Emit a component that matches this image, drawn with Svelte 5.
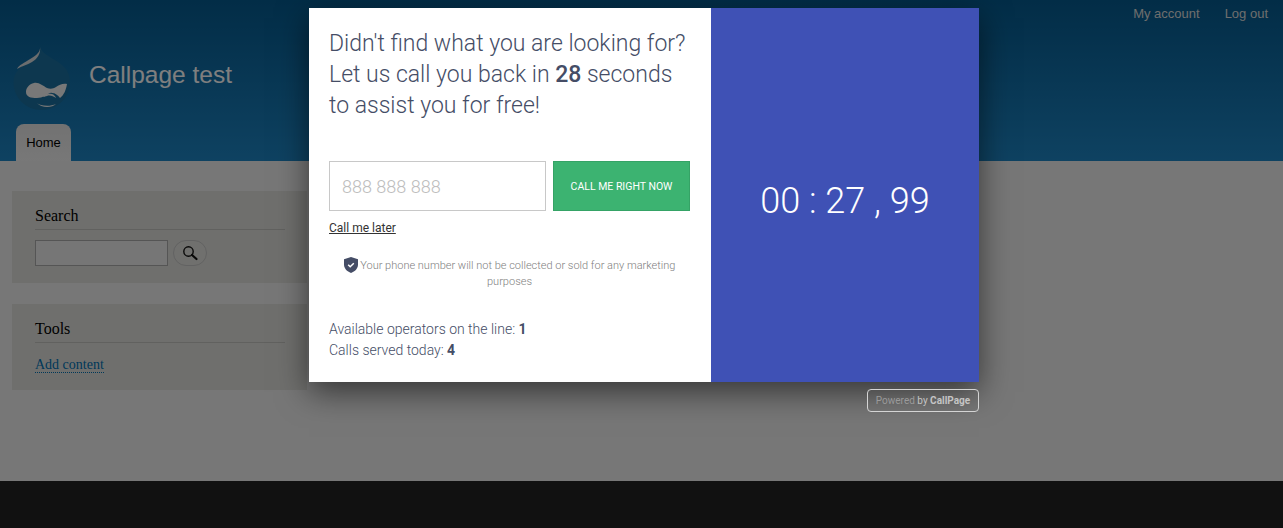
<script>
  let phone = '';
  const operators = 1;
  const callsToday = 4;
</script>

<div class="page">
  <header class="site-header">
    <nav class="secondary-menu">
      <a href="/user">My account</a>
      <a href="/logout">Log out</a>
    </nav>
    <div class="branding">
      <svg class="logo" viewBox="0 0 58 65" width="58" height="65" aria-label="Drupal">
        <path d="M27 1c1 6-4 9-9 13C9 20 .5 27 .5 37c0 16 12.500 28 28 28s28.500-12 28.500-28C57 22 45 17 37 12 32 9 28 6 27 1z" fill="#1a6f9e" />
        <path d="M27 2c.5 5-3.500 8-9 11.500C11 18 6 20 4 24c5-3 10-4 15-7 5-3 9-8 8-15z" fill="#d6dadd" />
        <path d="M13 47c0-4 3-8 8-9 5-1 9 3 13 5 3 1 6 1 9-1 3-2 7-4 11-3-1 6-3 11-7 14-2-3-5-5-8-5-3-1-4 2-7 3-3 1-5 2-8 2-6 0-11-1-11-6z" fill="#f0f0f0" />
        <path d="M24 58c3 3 13 4 19 1-4 4-15 4-19-1zM30 52c2-3 6-4 9-3 2 .5 3 2 4 4-3-2-6-3-9-2-1 .3-3 1-4 1z" fill="#f0f0f0" />
      </svg>
      <a class="site-name" href="/">Callpage test</a>
    </div>
    <ul class="tabs">
      <li><a href="/">Home</a></li>
    </ul>
  </header>

  <main class="content">
    <aside class="sidebar">
      <section class="block">
        <h2>Search</h2>
        <form class="search-form">
          <input type="text" aria-label="Search" />
          <button type="button" aria-label="Search">
            <svg viewBox="0 0 16 16" width="16" height="16">
              <circle cx="6.500" cy="6.500" r="4.700" fill="none" stroke="#111" stroke-width="1.400" />
              <path d="M10 10l4.500 4" stroke="#111" stroke-width="2.200" stroke-linecap="round" />
            </svg>
          </button>
        </form>
      </section>
      <section class="block tools">
        <h2>Tools</h2>
        <a href="/node/add">Add content</a>
      </section>
    </aside>
  </main>

  <footer class="site-footer"></footer>

  <div class="overlay"></div>

  <div class="modal-wrap">
    <div class="modal">
      <div class="pane-left">
        <h1>Didn't find what you are looking for?<br />Let us call you back in <b>28</b> seconds to assist you for free!</h1>
        <div class="call-form">
          <input type="tel" placeholder="888 888 888" bind:value={phone} />
          <button type="button">CALL ME RIGHT NOW</button>
        </div>
        <a class="later" href="#later">Call me later</a>
        <p class="privacy">
          <svg viewBox="0 0 14 16" width="14" height="16">
            <path d="M7 0l7 2.200v5.300c0 4-3 7-7 8.500-4-1.500-7-4.500-7-8.500V2.200z" fill="#454d66" />
            <path d="M4.200 7.800l2 2 3.600-3.600" fill="none" stroke="#fff" stroke-width="1.500" />
          </svg>
          Your phone number will not be collected or sold for any marketing purposes
        </p>
        <div class="stats">
          <div>Available operators on the line: <b>{operators}</b></div>
          <div>Calls served today: <b>{callsToday}</b></div>
        </div>
      </div>
      <div class="pane-right">00 : 27 , 99</div>
    </div>
    <a class="powered" href="#callpage">Powered <span>by <b>CallPage</b></span></a>
  </div>
</div>

<style>
  :global(body) {
    margin: 0;
    font-family: "Liberation Sans", sans-serif;
    overflow: hidden;
  }
  .page {
    position: relative;
    height: 528px;
    display: flex;
    flex-direction: column;
    background: #eeeeee;
  }

  /* header */
  .site-header {
    height: 161px;
    box-sizing: border-box;
    background: linear-gradient(#055a8e, #1d84c3);
    display: flex;
    flex-direction: column;
  }
  .secondary-menu {
    display: flex;
    justify-content: flex-end;
    gap: 25px;
    padding: 6px 15px 0 0;
    height: 15px;
    font-size: 13px;
    line-height: 15px;
  }
  .secondary-menu a { color: #dcdcdc; text-decoration: none; }
  .branding {
    display: flex;
    align-items: center;
    gap: 18px;
    padding: 24px 0 0 13px;
    height: 65px;
  }
  .site-name {
    color: #fffeff;
    font-size: 24.500px;
    text-decoration: none;
    margin-bottom: 6px;
  }
  .tabs {
    list-style: none;
    margin: 14px 0 0 16px;
    padding: 0;
  }
  .tabs a {
    display: block;
    width: 55px;
    height: 37px;
    box-sizing: border-box;
    padding-top: 11px;
    text-align: center;
    font-size: 13px;
    line-height: 15px;
    color: #000;
    text-decoration: none;
    background: linear-gradient(#e4e4e4, #f0f0f0);
    border-radius: 8px 8px 0 0;
  }

  /* page body */
  .content {
    flex: 1;
    padding: 30px 0 0 12px;
  }
  .sidebar { width: 295px; }
  .block {
    background: #dfdfdb;
    box-sizing: border-box;
    height: 92px;
    padding: 15px 22px 0 23px;
    margin-bottom: 21px;
    font-family: "Liberation Serif", serif;
  }
  .tools { height: 86px; }
  .block h2 {
    margin: 0 0 10px;
    font-size: 16px;
    font-weight: 400;
    line-height: 19px;
    height: 23px;
    color: #000;
    border-bottom: 1px solid #c2c2be;
  }
  .search-form { display: flex; gap: 5px; }
  .search-form input {
    width: 133px;
    height: 26px;
    box-sizing: border-box;
    background: #ececec;
    border: 1px solid #ababab;
    padding: 0;
  }
  .search-form button {
    width: 34px;
    height: 26px;
    padding: 0;
    display: flex;
    align-items: center;
    justify-content: center;
    background: #e0e0dc;
    border: 1px solid #c4c4c4;
    border-radius: 13px;
  }
  .tools a {
    font-size: 14px;
    color: #0071b3;
    text-decoration: none;
    border-bottom: 1px dotted #0071b3;
    display: inline-block;
    line-height: 15px;
    margin-top: 4px;
  }

  .site-footer {
    height: 47px;
    background: #222222;
  }

  .overlay {
    position: absolute;
    inset: 0;
    background: rgba(0, 0, 0, 0.5);
  }

  /* callback popup */
  .modal-wrap {
    position: absolute;
    left: 309px;
    top: 8px;
    width: 670px;
    display: flex;
    flex-direction: column;
    align-items: flex-end;
    gap: 7px;
    font-family: Roboto, sans-serif;
  }
  .modal {
    width: 100%;
    height: 374px;
    display: flex;
    box-shadow: 0 10px 30px rgba(0, 0, 0, 0.55);
  }
  .pane-left {
    width: 402px;
    box-sizing: border-box;
    background: #fff;
    padding: 20px 21px 0 20px;
    color: #454d66;
    font-weight: 300;
  }
  h1 {
    margin: 0 0 40px;
    font-size: 23px;
    line-height: 31px;
    font-weight: 300;
    height: 93px;
  }
  h1 b { font-weight: 500; }
  .call-form { display: flex; gap: 7px; }
  .call-form input {
    width: 217px;
    height: 50px;
    box-sizing: border-box;
    border: 1px solid #c8c8c8;
    padding: 0 12px;
    font-family: inherit;
    font-size: 18px;
    font-weight: 300;
    outline: none;
  }
  .call-form input::placeholder { color: #bdbdbd; opacity: 1; }
  .call-form button {
    width: 137px;
    height: 50px;
    padding: 0;
    background: #3cb371;
    border: 1px solid #35a366;
    color: #fff;
    font-family: inherit;
    font-size: 10.500px;
    font-weight: 400;
  }
  .later {
    display: block;
    width: max-content;
    margin-top: 9px;
    font-size: 12px;
    line-height: 16px;
    color: #333;
    font-weight: 400;
  }
  .privacy {
    margin: 21px 0 0;
    padding: 0 12px;
    text-align: center;
    font-size: 11px;
    line-height: 16px;
    color: #808080;
    height: 41px;
  }
  .privacy svg {
    vertical-align: -4px;
    margin-right: 0;
  }
  .stats {
    margin-top: 21px;
    font-size: 14px;
    line-height: 21px;
  }
  .stats b { font-weight: 700; }
  .pane-right {
    flex: 1;
    background: #3f51b5;
    color: #fff;
    display: flex;
    align-items: center;
    justify-content: center;
    padding-top: 12px;
    box-sizing: border-box;
    font-size: 36px;
    font-weight: 300;
  }
  .powered {
    box-sizing: border-box;
    width: 112px;
    height: 23px;
    border: 1px solid #d4d4d4;
    border-radius: 4px;
    text-align: center;
    font-size: 10px;
    line-height: 21px;
    color: #9a9a9a;
    text-decoration: none;
  }
  .powered span { color: #c4c4c4; }
</style>
